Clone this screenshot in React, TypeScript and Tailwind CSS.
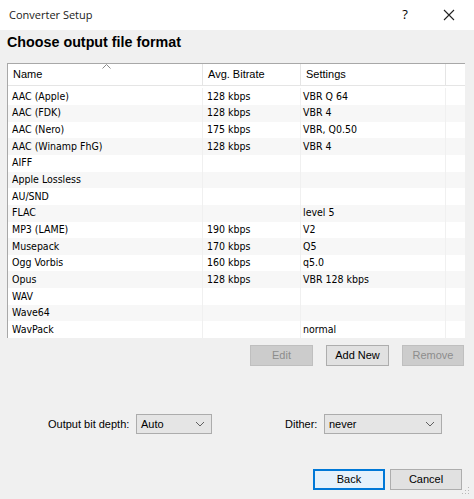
import React from "react";

const rows = [
  ["AAC (Apple)", "128 kbps", "VBR Q 64"],
  ["AAC (FDK)", "128 kbps", "VBR 4"],
  ["AAC (Nero)", "175 kbps", "VBR, Q0.50"],
  ["AAC (Winamp FhG)", "128 kbps", "VBR 4"],
  ["AIFF", "", ""],
  ["Apple Lossless", "", ""],
  ["AU/SND", "", ""],
  ["FLAC", "", "level 5"],
  ["MP3 (LAME)", "190 kbps", "V2"],
  ["Musepack", "170 kbps", "Q5"],
  ["Ogg Vorbis", "160 kbps", "q5.0"],
  ["Opus", "128 kbps", "VBR 128 kbps"],
  ["WAV", "", ""],
  ["Wave64", "", ""],
  ["WavPack", "", "normal"],
];

const Chevron = () => (
  <svg width="10" height="6" viewBox="0 0 10 6" className="text-[#606060]">
    <path d="M1 1 L5 5 L9 1" fill="none" stroke="currentColor" strokeWidth="1" />
  </svg>
);

export default function App() {
  return (
    <div className="w-[474px] h-[499px] bg-[#f0f0f0] flex flex-col overflow-hidden relative font-['Liberation_Sans',sans-serif] text-[11px] text-black">
      {/* title bar */}
      <div className="h-[30px] bg-white flex items-center flex-none">
        <div className="pl-[9px] flex-1 font-['Open_Sans',sans-serif] text-[11px] text-[#1a1a1a]">Converter Setup</div>
        <div className="w-[20px] text-center font-['Open_Sans',sans-serif] text-[13px] mr-[11px]">?</div>
        <div className="w-[46px] flex justify-center mr-[2px]">
          <svg width="12" height="12" viewBox="0 0 12 12">
            <path d="M1 1 L11 11 M11 1 L1 11" stroke="#222" strokeWidth="1.1" />
          </svg>
        </div>
      </div>

      <div className="h-[33px] pt-[3px] pl-[7px] flex-none">
        <div className="font-['Liberation_Sans',sans-serif] font-bold text-[14.3px] leading-[18px]">Choose output file format</div>
      </div>

      {/* list */}
      <div className="ml-[7px] w-[458px] h-[275px] bg-white border-t border-l border-[#a8a8a8] flex flex-col flex-none">
        <div className="h-[24px] flex border-b border-[#e5e5e5] relative">
          <div className="w-[195px] pl-[5px] flex items-center border-r border-[#e5e5e5]">Name</div>
          <div className="w-[98px] pl-[5px] flex items-center border-r border-[#e5e5e5]">Avg. Bitrate</div>
          <div className="w-[145px] pl-[5px] flex items-center border-r border-[#e5e5e5]">Settings</div>
          <div className="flex-1" />
          <svg width="9" height="5" viewBox="0 0 9 5" className="absolute left-[94px] top-[0px]">
            <path d="M0.5 4.5 L4.5 0.5 L8.5 4.5" fill="none" stroke="#8a8a8a" strokeWidth="1" />
          </svg>
        </div>
        <div className="flex flex-col pt-[2px] font-['DejaVu_Sans_Condensed','Liberation_Sans',sans-serif] text-[10.5px]">
          {rows.map((r, i) => (
            <div key={r[0]} className={`h-[16.65px] flex items-center ${i % 2 === 1 ? "bg-[#f7f7f7]" : "bg-white"}`}>
              <div className="w-[195px] pl-[4px] h-full flex items-center border-r border-[#f0f0f0]">{r[0]}</div>
              <div className="w-[98px] pl-[4px] h-full flex items-center border-r border-[#f0f0f0]">{r[1]}</div>
              <div className="w-[145px] pl-[2px] h-full flex items-center border-r border-[#f0f0f0]">{r[2]}</div>
              <div className="flex-1" />
            </div>
          ))}
        </div>
      </div>

      {/* edit buttons */}
      <div className="flex justify-end gap-[13px] pr-[10px] mt-[7px] flex-none">
        <div className="w-[63px] h-[21px] bg-[#cccccc] border border-[#bfbfbf] text-[#8d8d8d] flex items-center justify-center">Edit</div>
        <div className="w-[63px] h-[21px] bg-[#e1e1e1] border border-[#adadad] flex items-center justify-center">Add New</div>
        <div className="w-[62px] h-[21px] bg-[#cccccc] border border-[#bfbfbf] text-[#8d8d8d] flex items-center justify-center">Remove</div>
      </div>

      {/* options */}
      <div className="flex items-center mt-[48px] h-[20px] flex-none">
        <div className="pl-[48px] w-[136px]">Output bit depth:</div>
        <div className="w-[76px] h-[20px] bg-[#e5e5e5] border border-[#acacac] flex items-center justify-between pl-[4px] pr-[6px]">
          <span>Auto</span>
          <Chevron />
        </div>
        <div className="ml-[73px] w-[39px]">Dither:</div>
        <div className="w-[118px] h-[20px] bg-[#e5e5e5] border border-[#acacac] flex items-center justify-between pl-[4px] pr-[6px]">
          <span>never</span>
          <Chevron />
        </div>
      </div>

      {/* bottom buttons */}
      <div className="flex justify-end gap-[5px] pr-[12px] mt-[35px] flex-none">
        <div className="w-[72px] h-[21px] bg-[#e5f1fb] border-2 border-[#0078d7] flex items-center justify-center">Back</div>
        <div className="w-[72px] h-[21px] bg-[#e1e1e1] border border-[#adadad] flex items-center justify-center">Cancel</div>
      </div>

      {/* size grip */}
      <svg width="8" height="8" viewBox="0 0 8 8" className="absolute right-[4px] bottom-[4px]">
        <rect x="6" y="0" width="1" height="1" fill="#b8b8b8" />
        <rect x="3" y="3" width="1" height="1" fill="#b8b8b8" />
        <rect x="6" y="3" width="1" height="1" fill="#b8b8b8" />
        <rect x="0" y="6" width="1" height="1" fill="#b8b8b8" />
        <rect x="3" y="6" width="1" height="1" fill="#b8b8b8" />
        <rect x="6" y="6" width="1" height="1" fill="#b8b8b8" />
      </svg>
    </div>
  );
}
